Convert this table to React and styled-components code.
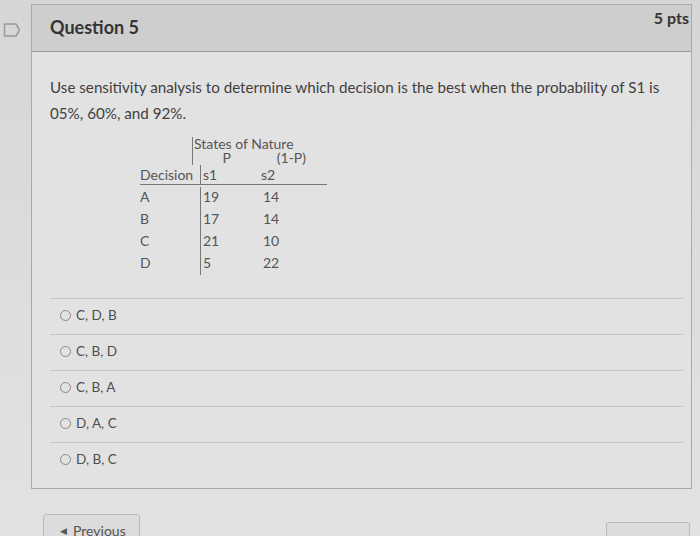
import React from "react";
import styled, { createGlobalStyle } from "styled-components";

const Global = createGlobalStyle`
  html, body { margin: 0; padding: 0; }
  body {
    width: 700px; height: 536px; overflow: hidden;
    background: linear-gradient(180deg, #d6d6d6 0%, #dedede 60%, #e2e2e2 100%);
    font-family: Lato, "Open Sans", "Liberation Sans", sans-serif;
  }
`;

const Page = styled.div`
  display: flex;
  padding-top: 4px;
`;

const Gutter = styled.div`
  width: 31px;
  flex: none;
  padding-top: 19px;
  display: flex;
  justify-content: flex-start;
`;

const Main = styled.div`
  width: 661px;
  flex: none;
  display: flex;
  flex-direction: column;
`;

const Card = styled.div`
  border: 1px solid #a9a9a9;
  background: #e2e2e2;
`;

const Header = styled.div`
  height: 46px;
  background: #cecece;
  border-bottom: 1px solid #9c9c9c;
  display: flex;
  align-items: center;
  justify-content: space-between;
  padding: 0 2px 0 18px;
`;

const Title = styled.h2`
  margin: 0;
  font-size: 18px;
  font-weight: 700;
  color: #353535;
  padding-bottom: 2px;
`;

const Pts = styled.span`
  font-size: 16px;
  font-weight: 700;
  color: #333;
  padding-bottom: 22px;
`;

const Body = styled.div`
  padding: 22px 8px 10px 18px;
`;

const Question = styled.p`
  margin: 0;
  font-size: 15.2px;
  line-height: 26px;
  color: #3f3f3f;
`;

const TableWrap = styled.div`
  margin: 11px 0 0 90px;
  font-size: 14px;
  color: #555;
`;

const NatureHead = styled.div`
  margin-left: 52px;
  width: 136px;
  border-left: 1px solid #777;
  line-height: 13.5px;
  padding-bottom: 1px;
`;

const NatureTitle = styled.div`
  padding-left: 1px;
`;

const ProbRow = styled.div`
  display: flex;
`;

const Prob = styled.span`
  width: ${(p) => p.$w}px;
  text-align: ${(p) => p.$align || "left"};
`;

const Grid = styled.div`
  display: grid;
  grid-template-columns: 60px 55px 72px;
  grid-auto-rows: 22px;
`;

const Cell = styled.div`
  display: flex;
  align-items: center;
  box-sizing: border-box;
  padding-left: ${(p) => p.$pl || 0}px;
  padding-bottom: ${(p) => (p.$head ? 0 : 4)}px;
  ${(p) => (p.$line ? "border-left: 1px solid #777;" : "")}
  ${(p) => (p.$head ? "border-bottom: 1px solid #777; height: 20px;" : "")}
`;

const Options = styled.div`
  margin-top: 23px;
`;

const Option = styled.label`
  display: flex;
  align-items: center;
  height: 36px;
  border-top: 1px solid #c6c6c6;
  box-sizing: border-box;
  padding: 0 0 3px 10px;
  font-size: 13.5px;
  color: #4f4f4f;
`;

const Radio = styled.span`
  width: 9px;
  height: 9px;
  border: 1.5px solid #888;
  border-radius: 50%;
  margin-right: 5px;
  flex: none;
`;

const Footer = styled.div`
  display: flex;
  justify-content: space-between;
  align-items: flex-start;
  padding: 25px 2px 0 12px;
`;

const NavButton = styled.button`
  width: ${(p) => p.$w}px;
  height: 34px;
  margin-top: ${(p) => p.$mt || 0}px;
  background: #dcdcdc;
  border: 1px solid #b9b9b9;
  border-radius: 3px;
  font-family: inherit;
  font-size: 14px;
  color: #555;
  text-align: left;
  padding: 7px 0 0 16px;
  display: flex;
  align-items: flex-start;
  gap: 6px;
`;

const Caret = styled.span`
  font-size: 9px;
  line-height: 17px;
`;

const Flag = () => (
  <svg width="20" height="14" viewBox="0 0 20 14">
    <path d="M4.5 1 H16 L19.5 7 L16 13 H4.5 Z" fill="none" stroke="#999" strokeWidth="1.5" strokeLinejoin="round" />
  </svg>
);

const rows = [
  ["A", "19", "14"],
  ["B", "17", "14"],
  ["C", "21", "10"],
  ["D", "5", "22"],
];

const answers = ["C, D, B", "C, B, D", "C, B, A", "D, A, C", "D, B, C"];

export default function App() {
  return (
    <>
      <Global />
      <Page>
        <Gutter>
          <Flag />
        </Gutter>
        <Main>
          <Card>
            <Header>
              <Title>Question 5</Title>
              <Pts>5 pts</Pts>
            </Header>
            <Body>
              <Question>
                Use sensitivity analysis to determine which decision is the best when the probability of S1 is
                <br />
                05%, 60%, and 92%.
              </Question>
              <TableWrap>
                <NatureHead>
                  <NatureTitle>States of Nature</NatureTitle>
                  <ProbRow>
                    <Prob $w={38} $align="right">P</Prob>
                    <Prob $w={75} $align="right">(1-P)</Prob>
                  </ProbRow>
                </NatureHead>
                <Grid>
                  <Cell $head>Decision</Cell>
                  <Cell $head $line $pl={2}>s1</Cell>
                  <Cell $head $pl={6}>s2</Cell>
                  {rows.map(([d, a, b]) => (
                    <React.Fragment key={d}>
                      <Cell>{d}</Cell>
                      <Cell $line $pl={2}>{a}</Cell>
                      <Cell $pl={8}>{b}</Cell>
                    </React.Fragment>
                  ))}
                </Grid>
              </TableWrap>
              <Options>
                {answers.map((a) => (
                  <Option key={a}>
                    <Radio />
                    {a}
                  </Option>
                ))}
              </Options>
            </Body>
          </Card>
          <Footer>
            <NavButton $w={97}>
              <Caret>◀</Caret>Previous
            </NavButton>
            <NavButton $w={84} $mt={8} />
          </Footer>
        </Main>
      </Page>
    </>
  );
}
